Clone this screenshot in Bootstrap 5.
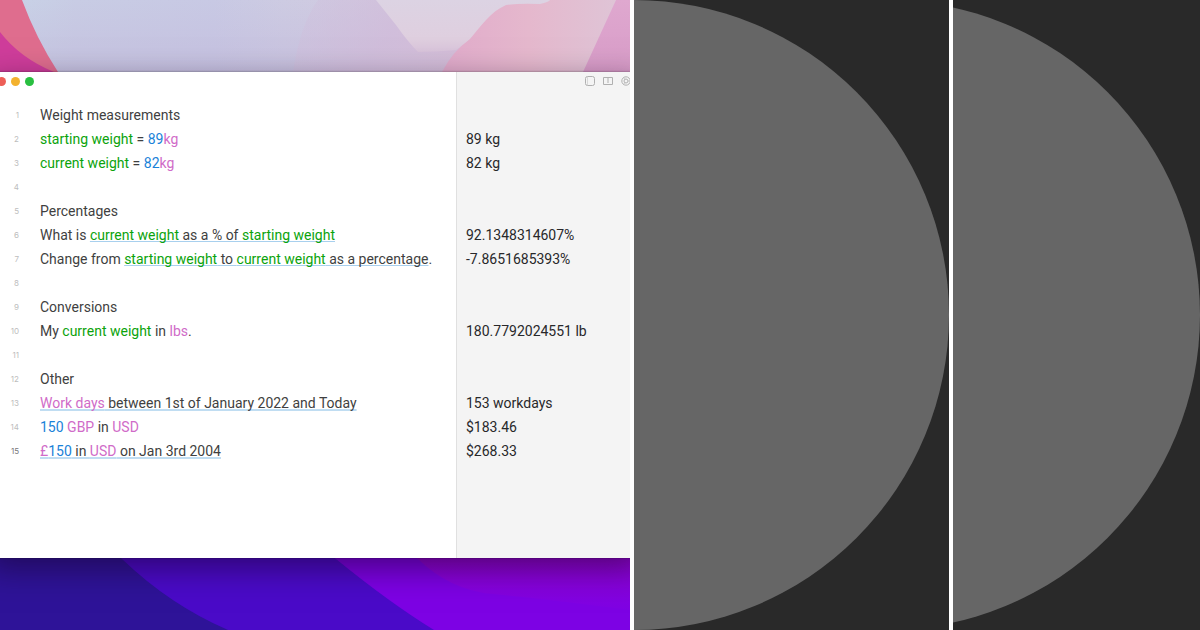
<!DOCTYPE html>
<html lang="en">
<head>
<meta charset="utf-8">
<meta name="viewport" content="width=device-width, initial-scale=1">
<title>Notepad calculator</title>
<link href="https://cdn.jsdelivr.net/npm/bootstrap@5.3.0/dist/css/bootstrap.min.css" rel="stylesheet">
<style>
  body { font-family: Roboto, "Liberation Sans", sans-serif; font-size: 14px; line-height: 24px; color: #3f3f41; background: #fff; }
  .gallery { gap: 4px; }
  .desktop { flex: 0 0 52.5%; padding: 72px 0; }
  .wallpaper { position: absolute; inset: 0; width: 100%; height: 100%; }
  .app-window { margin: 0 -12px; background: #fff; box-shadow: 0 10px 30px rgba(20, 0, 30, .5), 0 0 2px rgba(0, 0, 0, .4); }
  .editor { padding: 0 0 0 9px; }
  .results { flex: 0 0 186px; background: #f4f4f4; border-left: 1px solid #e0e0e0; color: #28282a; padding: 0 12px 0 9px; }
  .title-strip { height: 31px; }
  .lights { gap: 5px; padding-top: 5px; }
  .light-btn { width: 9px; height: 9px; border: 0; border-radius: 50%; padding: 0; }
  .l-red { background: #ed5f57; } .l-yellow { background: #f3b22f; } .l-green { background: #29bf40; }
  .tools { gap: 8px; margin-right: -1px; padding-top: 4px; }
  .tool-btn { border: 0; background: none; padding: 0; width: 10px; height: 10px; display: flex; }
  .tool-btn svg { width: 10px; height: 10px; fill: none; stroke: #b0b0b0; }
  .sheet { padding-bottom: 95px; }
  .sheet li { height: 24px; white-space: nowrap; }
  .num { flex: 0 0 22px; font-family: Inter, sans-serif; font-size: 8px; color: #bdbdbd; text-align: right; }
  .num.now { color: #77777a; }
  .expr { padding-left: 21px; }
  .v { color: #0ca30c; }
  .n { color: #1a82d8; }
  .k { color: #d06bc8; }
  .hint { text-decoration: underline 1px #a8d0ee; text-underline-offset: 1px; text-decoration-skip-ink: none; }
  .hint-wide { text-decoration-thickness: 2px; text-decoration-color: #c0ddf2; }
  .disc-panel { background: #292929; }
  .disc-a { flex: 0 0 26.25%; }
  .disc-panel svg { width: 100%; height: 100%; display: block; }
</style>
</head>
<body>
<main class="gallery d-flex min-vh-100 overflow-hidden">
  <section class="desktop position-relative overflow-hidden">
    <svg class="wallpaper" viewBox="0 0 630 630" preserveAspectRatio="none" aria-hidden="true">
      <defs>
        <linearGradient id="sky" x1="0" x2="1" y1="0" y2="0"><stop offset="0" stop-color="#c8d3e7"/><stop offset=".12" stop-color="#c8cce4"/><stop offset=".34" stop-color="#c8c9e4"/><stop offset=".45" stop-color="#cdcbe2"/><stop offset="1" stop-color="#ddc8dc"/></linearGradient>
        <linearGradient id="dusk" x1="0" x2="0" y1="0" y2="1"><stop offset="0" stop-color="#c3b9dc" stop-opacity="0"/><stop offset="1" stop-color="#c3b9dc" stop-opacity=".55"/></linearGradient>
        <linearGradient id="mauve" x1="0" x2="1" y1="0" y2=".3"><stop offset="0" stop-color="#cfbfdc" stop-opacity=".3"/><stop offset=".6" stop-color="#d1bcda"/><stop offset="1" stop-color="#d5bcd7"/></linearGradient>
        <linearGradient id="mist" x1="0" x2="0" y1="0" y2="1"><stop offset="0" stop-color="#dcd3e3"/><stop offset=".75" stop-color="#dfcfdf"/><stop offset="1" stop-color="#d8c3da"/></linearGradient>
        <linearGradient id="rose" x1="0" x2="1" y1="0" y2="0"><stop offset="0" stop-color="#e1abcb"/><stop offset=".5" stop-color="#e5b8cd"/><stop offset="1" stop-color="#dfc4d6"/></linearGradient>
        <linearGradient id="orchid" x1="0" x2="0" y1="0" y2="1"><stop offset="0" stop-color="#dfa8cf"/><stop offset="1" stop-color="#d89cc8"/></linearGradient>
        <linearGradient id="violet" x1="0" x2="0" y1="0" y2="1"><stop offset="0" stop-color="#9a06c0"/><stop offset=".55" stop-color="#8a02d8"/><stop offset="1" stop-color="#7f02e4"/></linearGradient>
      </defs>
      <rect width="630" height="72" fill="url(#sky)"/>
      <rect width="630" height="72" fill="url(#dusk)"/>
      <path d="M318 0H480V72H293Q300 25 318 0Z" fill="url(#mauve)" opacity=".8"/>
      <path d="M376 0H616L500 20L456 50Q436 52 418 52Q408 42 396 25Z" fill="url(#mist)"/>
      <path d="M442 72Q452 52 470 39C482 25 490 12 506 5Q520 3 540 4Q549 2 550 0H616L584 72Z" fill="url(#rose)"/>
      <path d="M616 0H630V72H583Z" fill="url(#orchid)"/>
      <path d="M0 0H22Q36 38 58 72H0Z" fill="#df6d8e"/>
      <path d="M0 32Q20 58 54 72H0Z" fill="#cf3d9b"/>
      <rect y="500" width="630" height="130" fill="#2e1398"/>
      <path d="M80 520L122 559Q170 605 228 630H450V520Z" fill="#4a0ac8"/>
      <path d="M300 530L336 559Q390 603 434 630H630V530Z" fill="#7d02e4"/>
      <path d="M380 530L418 559Q450 590 492 594T630 610V530Z" fill="url(#violet)"/>
    </svg>
    <div class="app-window position-relative d-flex">
      <div class="editor flex-grow-1">
        <div class="title-strip">
          <div class="lights d-flex">
            <button class="light-btn l-red" type="button" aria-label="Close"></button>
            <button class="light-btn l-yellow" type="button" aria-label="Minimize"></button>
            <button class="light-btn l-green" type="button" aria-label="Zoom"></button>
          </div>
        </div>
        <ol class="sheet list-unstyled mb-0">
          <li class="d-flex"><span class="num">1</span><span class="expr">Weight measurements</span></li>
          <li class="d-flex"><span class="num">2</span><span class="expr"><span class="v">starting weight</span> = <span class="n">89</span><span class="k">kg</span></span></li>
          <li class="d-flex"><span class="num">3</span><span class="expr"><span class="v">current weight</span> = <span class="n">82</span><span class="k">kg</span></span></li>
          <li class="d-flex"><span class="num">4</span></li>
          <li class="d-flex"><span class="num">5</span><span class="expr">Percentages</span></li>
          <li class="d-flex"><span class="num">6</span><span class="expr">What is <span class="hint"><span class="v">current weight</span> as a % of <span class="v">starting weight</span></span></span></li>
          <li class="d-flex"><span class="num">7</span><span class="expr">Change from <span class="hint"><span class="v">starting weight</span> to <span class="v">current weight</span> as a percentage</span>.</span></li>
          <li class="d-flex"><span class="num">8</span></li>
          <li class="d-flex"><span class="num">9</span><span class="expr">Conversions</span></li>
          <li class="d-flex"><span class="num">10</span><span class="expr">My <span class="v">current weight</span> in <span class="k">lbs</span>.</span></li>
          <li class="d-flex"><span class="num">11</span></li>
          <li class="d-flex"><span class="num">12</span><span class="expr">Other</span></li>
          <li class="d-flex"><span class="num">13</span><span class="expr"><span class="hint hint-wide"><span class="k">Work days</span> between 1st of January 2022 and Today</span></span></li>
          <li class="d-flex"><span class="num">14</span><span class="expr"><span class="n">150</span> <span class="k">GBP</span> in <span class="k">USD</span></span></li>
          <li class="d-flex"><span class="num now">15</span><span class="expr"><span class="hint hint-wide"><span class="k">£</span><span class="n">150</span> in <span class="k">USD</span> on Jan 3rd 2004</span></span></li>
        </ol>
      </div>
      <div class="results">
        <div class="title-strip">
          <div class="tools d-flex justify-content-end">
            <button class="tool-btn" type="button" aria-label="Sheet"><svg viewBox="0 0 10 10"><rect x=".5" y=".5" width="9" height="9" rx="2"/><path d="M2.500 1V9" stroke-opacity=".4"/></svg></button>
            <button class="tool-btn" type="button" aria-label="Documentation"><svg viewBox="0 0 10 10"><path d="M.5 1.500H9.500V8.500H.5ZM5 2V7"/></svg></button>
            <button class="tool-btn" type="button" aria-label="Settings"><svg viewBox="0 0 10 10"><circle cx="5" cy="5" r="4.200"/><circle cx="5" cy="5" r="2"/><path d="M7 5H9M4 6.700L3 8.500M4 3.300L3 1.500" stroke-opacity=".5"/></svg></button>
          </div>
        </div>
        <ul class="sheet list-unstyled mb-0">
          <li></li><li>89 kg</li><li>82 kg</li><li></li><li></li>
          <li>92.1348314607%</li><li>-7.8651685393%</li><li></li><li></li>
          <li>180.7792024551 lb</li><li></li><li></li>
          <li>153 workdays</li><li>$183.46</li><li>$268.33</li>
        </ul>
      </div>
    </div>
  </section>
  <section class="disc-panel disc-a position-relative overflow-hidden">
    <svg class="position-absolute top-0 start-0" viewBox="315 0 315 630" preserveAspectRatio="xMaxYMid slice" aria-hidden="true"><circle cx="315" cy="315" r="315" fill="#666"/></svg>
  </section>
  <section class="disc-panel flex-grow-1 position-relative overflow-hidden">
    <svg class="position-absolute top-0 start-0" viewBox="383 0 247 630" preserveAspectRatio="xMaxYMid slice" aria-hidden="true"><circle cx="315" cy="315" r="315" fill="#666"/></svg>
  </section>
</main>
<script src="https://cdn.jsdelivr.net/npm/bootstrap@5.3.0/dist/js/bootstrap.bundle.min.js"></script>
</body>
</html>
